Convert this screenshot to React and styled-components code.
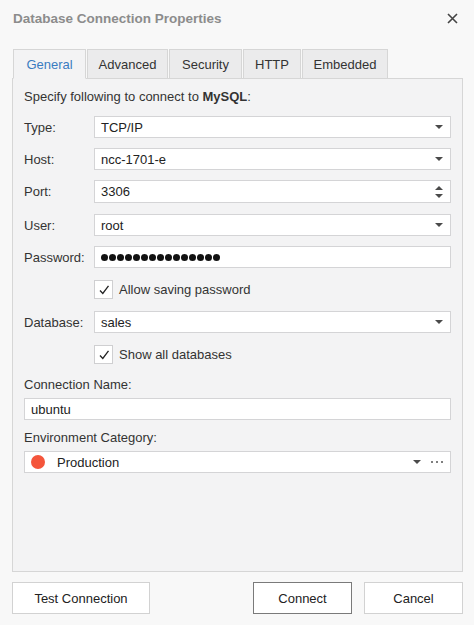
import styled, { createGlobalStyle } from "styled-components";

const GlobalStyle = createGlobalStyle`
  html, body {
    margin: 0;
    padding: 0;
    background: #f8f8f8;
  }
  body {
    font-family: "Liberation Sans", Arial, sans-serif;
    font-size: 13px;
    color: #333;
  }
`;

const Dialog = styled.div`
  width: 474px;
  height: 625px;
  box-sizing: border-box;
  padding: 0 11px 10px 12px;
  display: flex;
  flex-direction: column;
  background: #f8f8f8;
`;

const Header = styled.div`
  height: 36px;
  display: flex;
  align-items: center;
  justify-content: space-between;
  padding-left: 1px;
`;

const Title = styled.div`
  font-weight: bold;
  font-size: 13.5px;
  color: #8c8c8c;
`;

const CloseBtn = styled.div`
  width: 16px;
  height: 16px;
  display: flex;
  align-items: center;
  justify-content: center;
  margin-right: 3px;
`;

const TabStrip = styled.div`
  display: flex;
  margin-top: 13px;
  padding-left: 1px;
  gap: 1px;
  position: relative;
  z-index: 1;
  margin-bottom: -1px;
`;

const Tab = styled.div`
  width: ${(p) => p.$w}px;
  height: 30px;
  box-sizing: border-box;
  display: flex;
  align-items: center;
  justify-content: center;
  border: 1px solid #d6d6d6;
  border-bottom: ${(p) => (p.$active ? "1px solid #f3f3f4" : "1px solid #d6d6d6")};
  background: ${(p) => (p.$active ? "#f3f3f4" : "#ebebec")};
  color: ${(p) => (p.$active ? "#3a7cc1" : "#333")};
`;

const Panel = styled.div`
  height: 494px;
  box-sizing: border-box;
  border: 1px solid #d6d6d6;
  background: #f3f3f4;
  padding: 9px 11px 0 11px;
  display: flex;
  flex-direction: column;
`;

const Intro = styled.div`
  line-height: 18px;
`;

const Row = styled.div`
  display: flex;
  align-items: center;
  margin-top: ${(p) => p.$mt}px;
`;

const Label = styled.div`
  width: 70px;
  flex: none;
`;

const Field = styled.div`
  flex: 1;
  height: ${(p) => p.$h || 22}px;
  box-sizing: border-box;
  background: #fff;
  border: 1px solid #d4d4d6;
  display: flex;
  align-items: center;
  padding: 0 7px 0 6px;
  gap: 8px;
`;

const Value = styled.div`
  flex: 1;
  color: #222;
`;

const Dots = styled.div`
  flex: 1;
  display: flex;
  gap: 1px;
`;

const PassDot = styled.span`
  width: 7px;
  height: 7px;
  border-radius: 50%;
  background: #111;
`;

const Arrow = styled.div`
  width: 0;
  height: 0;
  border-left: 4px solid transparent;
  border-right: 4px solid transparent;
  border-top: 4px solid #4a4a4a;
`;

const ArrowUp = styled(Arrow)`
  border-top: none;
  border-bottom: 4px solid #4a4a4a;
`;

const Spin = styled.div`
  display: flex;
  flex-direction: column;
  gap: 4px;
`;

const CheckRow = styled.div`
  display: flex;
  align-items: center;
  gap: 6px;
  margin-left: 70px;
  margin-top: 12px;
`;

const Box = styled.div`
  width: 19px;
  height: 19px;
  box-sizing: border-box;
  background: #fff;
  border: 1px solid #cfcfd1;
  display: flex;
  align-items: center;
  justify-content: center;
`;

const StackLabel = styled.div`
  line-height: 18px;
  margin-top: ${(p) => p.$mt}px;
`;

const Dot = styled.div`
  width: 14px;
  height: 14px;
  border-radius: 50%;
  background: #f4553b;
  margin-right: 4px;
`;

const More = styled.div`
  display: flex;
  gap: 3px;
  margin-left: 2px;
`;

const MoreDot = styled.span`
  width: 2px;
  height: 2px;
  border-radius: 50%;
  background: #555;
`;

const Footer = styled.div`
  display: flex;
  align-items: center;
  margin-top: 10px;
  gap: 12px;
`;

const Button = styled.div`
  width: ${(p) => p.$w}px;
  height: 32px;
  box-sizing: border-box;
  background: #fff;
  border: 1px solid ${(p) => (p.$default ? "#7a7a7a" : "#d2d2d2")};
  display: flex;
  align-items: center;
  justify-content: center;
  color: #222;
`;

const Spacer = styled.div`
  flex: 1;
`;

function Check() {
  return (
    <Box>
      <svg width="12" height="12" viewBox="0 0 12 12">
        <path d="M2 6.5 L4.8 9.5 L10.5 1.8" fill="none" stroke="#222" strokeWidth="1.3" />
      </svg>
    </Box>
  );
}

export default function App() {
  const dots = Array.from({ length: 15 }, (_, i) => <PassDot key={i} />);
  return (
    <>
      <GlobalStyle />
      <Dialog>
        <Header>
          <Title>Database Connection Properties</Title>
          <CloseBtn>
            <svg width="11" height="11" viewBox="0 0 11 11">
              <path d="M1 1 L10 10 M10 1 L1 10" stroke="#444" strokeWidth="1.6" />
            </svg>
          </CloseBtn>
        </Header>
        <TabStrip>
          <Tab $w={73} $active>General</Tab>
          <Tab $w={81}>Advanced</Tab>
          <Tab $w={73}>Security</Tab>
          <Tab $w={58}>HTTP</Tab>
          <Tab $w={86}>Embedded</Tab>
        </TabStrip>
        <Panel>
          <Intro>
            Specify following to connect to <b>MySQL</b>:
          </Intro>
          <Row $mt={10}>
            <Label>Type:</Label>
            <Field>
              <Value>TCP/IP</Value>
              <Arrow />
            </Field>
          </Row>
          <Row $mt={10}>
            <Label>Host:</Label>
            <Field>
              <Value>ncc-1701-e</Value>
              <Arrow />
            </Field>
          </Row>
          <Row $mt={10}>
            <Label>Port:</Label>
            <Field $h={23}>
              <Value>3306</Value>
              <Spin>
                <ArrowUp />
                <Arrow />
              </Spin>
            </Field>
          </Row>
          <Row $mt={11}>
            <Label>User:</Label>
            <Field>
              <Value>root</Value>
              <Arrow />
            </Field>
          </Row>
          <Row $mt={10}>
            <Label>Password:</Label>
            <Field>
              <Dots>{dots}</Dots>
            </Field>
          </Row>
          <CheckRow>
            <Check />
            Allow saving password
          </CheckRow>
          <Row $mt={12}>
            <Label>Database:</Label>
            <Field>
              <Value>sales</Value>
              <Arrow />
            </Field>
          </Row>
          <CheckRow>
            <Check />
            Show all databases
          </CheckRow>
          <StackLabel $mt={12}>Connection Name:</StackLabel>
          <Row $mt={4}>
            <Field>
              <Value>ubuntu</Value>
            </Field>
          </Row>
          <StackLabel $mt={9}>Environment Category:</StackLabel>
          <Row $mt={4}>
            <Field>
              <Dot />
              <Value>Production</Value>
              <Arrow />
              <More>
                <MoreDot />
                <MoreDot />
                <MoreDot />
              </More>
            </Field>
          </Row>
        </Panel>
        <Footer>
          <Button $w={138}>Test Connection</Button>
          <Spacer />
          <Button $w={99} $default>Connect</Button>
          <Button $w={99}>Cancel</Button>
        </Footer>
      </Dialog>
    </>
  );
}
